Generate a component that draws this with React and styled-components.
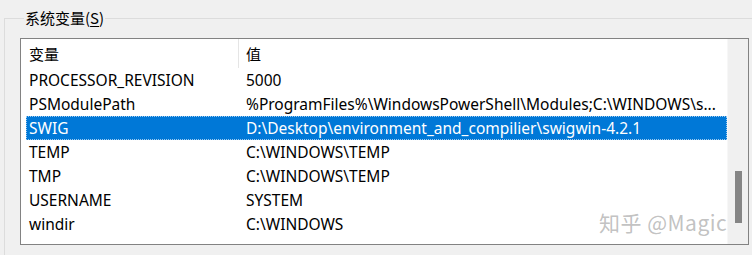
import React from "react";
import styled, { createGlobalStyle } from "styled-components";

const Global = createGlobalStyle`
  html, body { margin: 0; padding: 0; background: #f0f0f0; overflow: hidden; }
  body { font-family: "Noto Sans", "Noto Sans CJK SC", sans-serif; }
`;

const Page = styled.div`
  width: 752px;
  height: 255px;
  padding: 10px 0 0 4px;
  box-sizing: border-box;
  overflow: hidden;
`;

const Group = styled.fieldset`
  margin: 0;
  width: 780px;
  height: 260px;
  box-sizing: border-box;
  border: 1px solid #dcdcdc;
  padding: 12px 0 0 15px;
`;

const Legend = styled.legend`
  padding: 0 1px;
  margin-left: 4px;
  font-size: 15px;
  line-height: 16px;
  color: #000;
  font-family: "Noto Sans CJK SC", "Noto Sans", sans-serif;
  u { text-decoration: underline; text-underline-offset: 2px; }
`;

const ListBox = styled.div`
  width: 729px;
  height: 207px;
  box-sizing: border-box;
  border: 1px solid #828282;
  background: #fff;
  display: grid;
  grid-template-columns: 1fr 21px;
  overflow: hidden;
  position: relative;
`;

const Table = styled.div`
  display: flex;
  flex-direction: column;
  padding-left: 5px;
`;

const Header = styled.div`
  display: grid;
  grid-template-columns: 212px 1fr;
  height: 29px;
  font-family: "Noto Sans CJK SC", "Noto Sans", sans-serif;
  font-size: 15px;
  color: #000;
`;

const HeadCell = styled.div`
  display: flex;
  align-items: center;
  padding-left: ${(p) => (p.$first ? "3px" : "7px")};
  border-left: ${(p) => (p.$first ? "none" : "1px solid #e5e5e5")};
`;

const Row = styled.div`
  display: grid;
  grid-template-columns: 213px 1fr;
  height: 24px;
  align-items: center;
  font-size: 15.5px;
  color: ${(p) => (p.$sel ? "#fff" : "#000")};
  background: ${(p) => (p.$sel ? "#0078d7" : "transparent")};
  outline: ${(p) => (p.$sel ? "1px dotted #9ccaf0" : "none")};
  outline-offset: -1px;
  white-space: nowrap;
`;

const Cell = styled.div`
  padding-left: ${(p) => (p.$first ? "3px" : "7px")};
  overflow: hidden;
  white-space: nowrap;
`;

const Scroll = styled.div`
  background: #f0f0f0;
  border-left: 1px solid #f7f7f7;
  display: flex;
  justify-content: center;
  padding-top: 132px;
`;

const Thumb = styled.div`
  width: 7px;
  height: 52px;
  background: #858585;
`;

const Watermark = styled.div`
  position: absolute;
  left: 578px;
  top: 168px;
  font-size: 21px;
  color: rgba(160, 160, 160, 0.65);
  font-family: "Noto Sans CJK SC", "Noto Sans", sans-serif;
  letter-spacing: 0.5px;
  white-space: nowrap;
  pointer-events: none;
`;

const rows = [
  ["PROCESSOR_REVISION", "5000"],
  ["PSModulePath", "%ProgramFiles%\\WindowsPowerShell\\Modules;C:\\WINDOWS\\s..."],
  ["SWIG", "D:\\Desktop\\environment_and_compilier\\swigwin-4.2.1", true],
  ["TEMP", "C:\\WINDOWS\\TEMP"],
  ["TMP", "C:\\WINDOWS\\TEMP"],
  ["USERNAME", "SYSTEM"],
  ["windir", "C:\\WINDOWS"],
];

export default function App() {
  return (
    <>
      <Global />
      <Page>
        <Group>
          <Legend>
            系统变量(<u>S</u>)
          </Legend>
          <ListBox>
            <Table>
              <Header>
                <HeadCell $first>变量</HeadCell>
                <HeadCell>值</HeadCell>
              </Header>
              {rows.map(([k, v, sel]) => (
                <Row key={k} $sel={sel}>
                  <Cell $first>{k}</Cell>
                  <Cell>{v}</Cell>
                </Row>
              ))}
            </Table>
            <Scroll>
              <Thumb />
            </Scroll>
            <Watermark>知乎 @Magic</Watermark>
          </ListBox>
        </Group>
      </Page>
    </>
  );
}
